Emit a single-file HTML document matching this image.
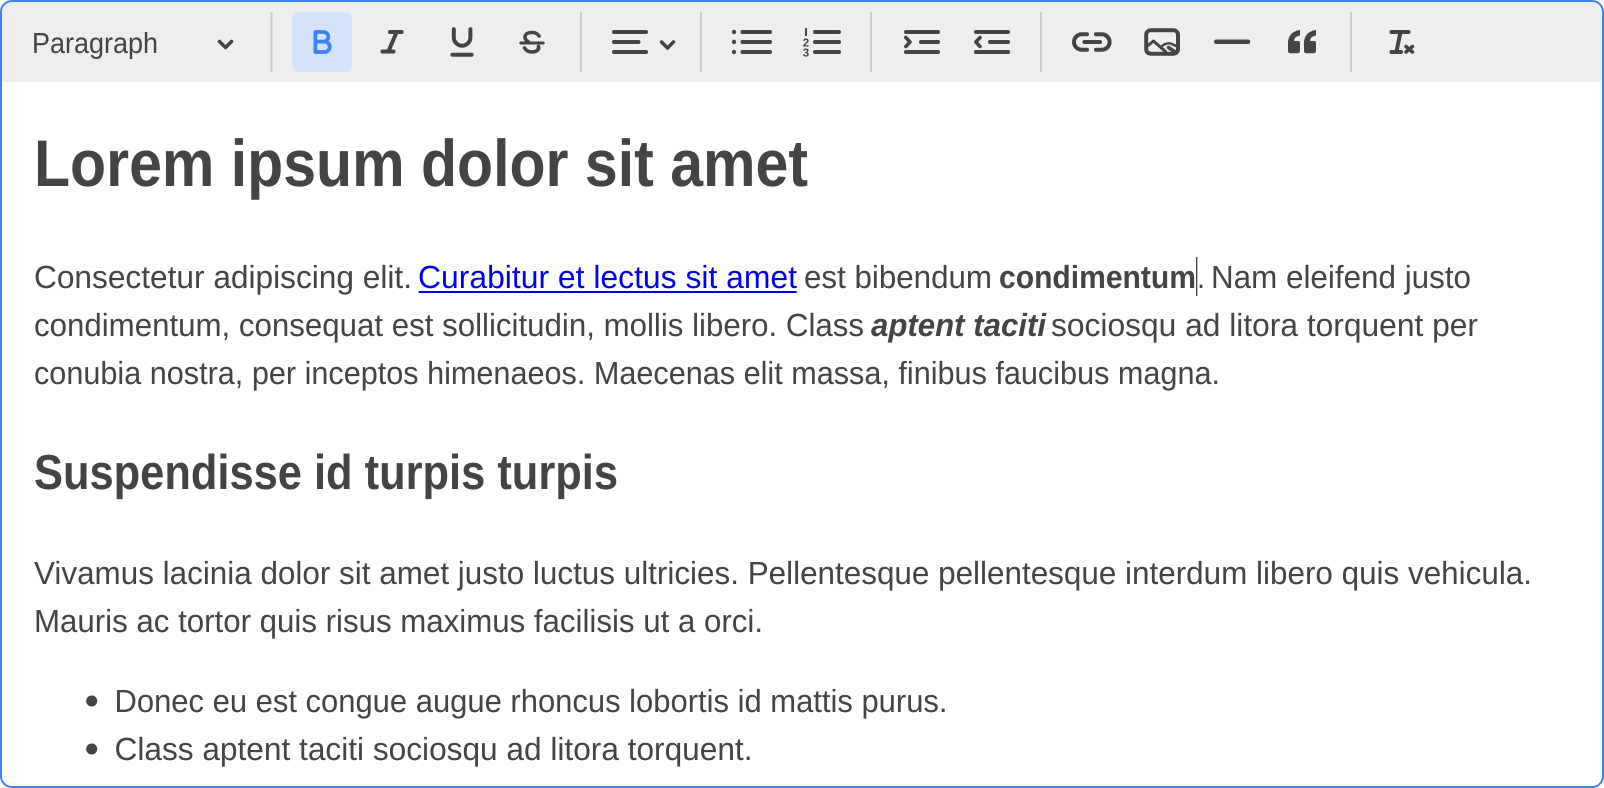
<!DOCTYPE html>
<html lang="en">
<head>
<meta charset="utf-8">
<title>Editor</title>
<style>
html,body{margin:0;padding:0;background:#fff;width:1604px;height:788px;overflow:hidden}
svg{display:block}
text{font-family:"Liberation Sans",sans-serif;fill:#444;font-size:32px;text-rendering:geometricPrecision}
.b{font-weight:700}
.bi{font-weight:700;font-style:italic}
.l{fill:#0000ee}
.s{fill:none;stroke:#444;stroke-width:4;stroke-linecap:round;stroke-linejoin:round}
.sep{fill:#ccc}
</style>
</head>
<body>
<svg width="1604" height="788" viewBox="0 0 1604 788" xmlns="http://www.w3.org/2000/svg">
  <!-- toolbar -->
  <path d="M1 82V12A11 11 0 0 1 12 1H1592A11 11 0 0 1 1603 12V82Z" fill="#eee"/>
  <rect x="1" y="1" width="1602" height="786" rx="11" fill="none" stroke="#3b82f6" stroke-width="2"/>

  <text x="32" y="53" style="font-size:29px" textLength="126" lengthAdjust="spacingAndGlyphs">Paragraph</text>
  <path class="s" style="stroke-width:3.500" d="M219.500 41.500l6 6 6-6"/>

  <rect class="sep" x="270.500" y="12" width="2" height="60"/>
  <rect class="sep" x="580" y="12" width="2" height="60"/>
  <rect class="sep" x="700" y="12" width="2" height="60"/>
  <rect class="sep" x="870" y="12" width="2" height="60"/>
  <rect class="sep" x="1040" y="12" width="2" height="60"/>
  <rect class="sep" x="1350" y="12" width="2" height="60"/>

  <!-- bold -->
  <rect x="292" y="12" width="60" height="60" rx="6" fill="#d2e3fb"/>
  <path d="M315.400 32H323.500a4.800 4.800 0 0 1 0 9.600H315.400ZM315.400 41.600H324.500a5.200 5.200 0 0 1 0 10.400H315.400Z" fill="none" stroke="#3b82f6" stroke-width="3.800" stroke-linejoin="round"/>
  <!-- italic -->
  <path class="s" d="M390 32H401.600M382.500 51.500H393.500M396.700 32L388.300 51.500"/>
  <!-- underline -->
  <path class="s" d="M453.800 29.200V37.400a8.300 8.300 0 0 0 16.600 0V29.200M452.400 54.700H471.600"/>
  <!-- strike -->
  <path class="s" style="stroke-width:3.600" d="M539 36C537.500 33.500 535 32.500 532 32.500C528 32.500 525 34 525 37C525 39 526 40.500 528 41.500M538.500 46.500C539.500 50 536 52 532 52C528.500 52 526 50.500 524.500 48"/>
  <path d="M520.800 43H543.200" fill="none" stroke="#444" stroke-width="3" stroke-linecap="round"/>
  <!-- align -->
  <path class="s" d="M614 32H646M614 42H638.500M614 52H646"/>
  <path class="s" style="stroke-width:3.500" d="M661.500 42l6 6 6-6"/>
  <!-- bullet list -->
  <circle cx="734" cy="32" r="2.200" fill="#444"/><circle cx="734" cy="42" r="2.200" fill="#444"/><circle cx="734" cy="52" r="2.200" fill="#444"/>
  <path class="s" d="M742.500 32H770M742.500 42H770M742.500 52H770"/>
  <!-- numbered list -->
  <rect x="805" y="28" width="2" height="8" fill="#444"/>
  <text x="806" y="46.500" text-anchor="middle" class="b" style="font-size:11.500px">2</text>
  <text x="806" y="56.500" text-anchor="middle" class="b" style="font-size:11.500px">3</text>
  <path class="s" d="M815 32H839M815 42H839M815 52H839"/>
  <!-- indent -->
  <path class="s" d="M906 32H938M921 42H938M906 52H938"/>
  <path d="M905.800 37.500L910 42L905.800 46.500" fill="none" stroke="#444" stroke-width="3.500" stroke-linecap="round" stroke-linejoin="round"/>
  <!-- outdent -->
  <path class="s" d="M976 32H1008M990 42H1008M976 52H1008"/>
  <path d="M980 37.500L975.800 42L980 46.500" fill="none" stroke="#444" stroke-width="3.500" stroke-linecap="round" stroke-linejoin="round"/>
  <!-- link -->
  <path class="s" d="M1087 34.300H1081.700a7.700 7.700 0 0 0 0 15.400H1087M1096 34.300H1101.900a7.700 7.700 0 0 1 0 15.400H1096M1084.500 42H1100"/>
  <!-- image -->
  <rect class="s" x="1146.200" y="30.300" width="31.800" height="23.400" rx="4.500"/>
  <path fill="none" stroke="#444" stroke-width="3" stroke-linecap="round" stroke-linejoin="round" d="M1148 45.500L1153.500 41L1165.500 51.500"/>
  <path fill="none" stroke="#444" stroke-width="2.400" stroke-linecap="round" stroke-linejoin="round" d="M1162 46C1165 43.500 1169 42.500 1172 44L1177 46.500"/>
  <path d="M1168.500 47.500L1174.500 51.500" fill="none" stroke="#444" stroke-width="3.500" stroke-linecap="round"/>
  <!-- hr -->
  <path d="M1216.200 41.800H1248" fill="none" stroke="#444" stroke-width="4.500" stroke-linecap="round"/>
  <!-- quote -->
  <path fill="#444" d="M1300 30C1292 31 1288 36 1288 43V51A2.300 2.300 0 0 0 1290.300 53.300H1297.700A2.300 2.300 0 0 0 1300 51V43A2 2 0 0 0 1298 41H1294C1294 38 1296 36.500 1300 35.500ZM1316 30C1308 31 1304 36 1304 43V51A2.300 2.300 0 0 0 1306.300 53.300H1313.700A2.300 2.300 0 0 0 1316 51V43A2 2 0 0 0 1314 41H1310C1310 38 1312 36.500 1316 35.500Z"/>
  <!-- clear format -->
  <path class="s" d="M1391.500 32H1408.500M1400.500 32L1397 49M1391.500 52H1401"/>
  <path d="M1406 46.500L1412.500 52M1412.500 46.500L1406 52" fill="none" stroke="#444" stroke-width="3.500" stroke-linecap="round"/>

  <!-- content -->
  <text class="b" x="34" y="186" style="font-size:66px" textLength="774" lengthAdjust="spacingAndGlyphs">Lorem ipsum dolor sit amet</text>

  <text x="34" y="288" textLength="378" lengthAdjust="spacingAndGlyphs">Consectetur adipiscing elit.</text>
  <text class="l" x="418" y="288" textLength="379" lengthAdjust="spacingAndGlyphs">Curabitur et lectus sit amet</text>
  <rect x="418.700" y="291" width="378" height="2" fill="#0000ee"/>
  <text x="804" y="288" textLength="188" lengthAdjust="spacingAndGlyphs">est bibendum</text>
  <text class="b" x="999" y="288" textLength="197" lengthAdjust="spacingAndGlyphs">condimentum</text>
  <text x="1197" y="288" textLength="8" lengthAdjust="spacingAndGlyphs">.</text>
  <text x="1211" y="288" textLength="260" lengthAdjust="spacingAndGlyphs">Nam eleifend justo</text>
  <rect x="1196" y="257" width="1.300" height="39" fill="#444"/>

  <text x="34" y="336" textLength="830" lengthAdjust="spacingAndGlyphs">condimentum, consequat est sollicitudin, mollis libero. Class</text>
  <text class="bi" x="871" y="336" textLength="175" lengthAdjust="spacingAndGlyphs">aptent taciti</text>
  <text x="1051" y="336" textLength="427" lengthAdjust="spacingAndGlyphs">sociosqu ad litora torquent per</text>

  <text x="34" y="384" textLength="1186" lengthAdjust="spacingAndGlyphs">conubia nostra, per inceptos himenaeos. Maecenas elit massa, finibus faucibus magna.</text>

  <text class="b" x="34" y="489" style="font-size:49px" textLength="584" lengthAdjust="spacingAndGlyphs">Suspendisse id turpis turpis</text>

  <text x="34" y="584" textLength="1498" lengthAdjust="spacingAndGlyphs">Vivamus lacinia dolor sit amet justo luctus ultricies. Pellentesque pellentesque interdum libero quis vehicula.</text>
  <text x="34" y="632" textLength="729" lengthAdjust="spacingAndGlyphs">Mauris ac tortor quis risus maximus facilisis ut a orci.</text>

  <circle cx="91.700" cy="701" r="5.500" fill="#444"/>
  <text x="114.500" y="712" textLength="833" lengthAdjust="spacingAndGlyphs">Donec eu est congue augue rhoncus lobortis id mattis purus.</text>
  <circle cx="91.700" cy="749" r="5.500" fill="#444"/>
  <text x="114.500" y="760" textLength="638" lengthAdjust="spacingAndGlyphs">Class aptent taciti sociosqu ad litora torquent.</text>
</svg>
</body>
</html>
